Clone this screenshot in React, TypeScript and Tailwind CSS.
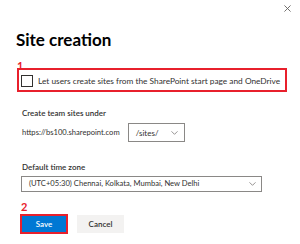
import React from 'react';

const Chevron: React.FC<{ className?: string }> = ({ className }) => (
  <svg viewBox="0 0 10 6" className={className} fill="none" stroke="#605e5c" strokeWidth="1">
    <path d="M0.5 0.5 L5 5 L9.5 0.5" />
  </svg>
);

const App: React.FC = () => {
  return (
    <div
      className="w-[300px] h-[244px] bg-white overflow-hidden text-[#323130]"
      style={{ fontFamily: 'Lato, "Noto Sans", sans-serif' }}
    >
      {/* close */}
      <div className="h-[16px] flex justify-end items-center pr-[9px]">
        <svg viewBox="0 0 8 8" className="w-[7px] h-[7px]" stroke="#605e5c" strokeWidth="1">
          <path d="M0.5 0.5 L7.5 7.5 M7.5 0.5 L0.5 7.5" />
        </svg>
      </div>

      <h1 className="mt-[12px] ml-[16px] h-[24px] leading-[24px] text-[17px] font-bold text-black">Site creation</h1>

      {/* annotation 1 */}
      <div className="mt-[8px] ml-[17px] h-[8px] leading-[11px] text-[11px] font-bold text-[#e8202c]">1</div>

      <div className="ml-[17px] w-[270px] h-[24px] border-2 border-[#e8202c] flex items-center pl-[2px] pt-[2px] gap-[5px]">
        <div className="w-[12px] h-[12px] border border-[#323130] bg-white shrink-0" />
        <span className="text-[8.3px] whitespace-nowrap">
          Let users create sites from the SharePoint start page and OneDrive
        </span>
      </div>

      <div className="mt-[14px] ml-[22px] h-[14px] leading-[14px] text-[8px] font-semibold">Create team sites under</div>

      <div className="mt-[3px] ml-[22px] h-[19px] flex items-center gap-[8px]">
        <span className="text-[7.6px] whitespace-nowrap">https://bs100.sharepoint.com</span>
        <div className="w-[57px] h-[19px] border border-[#8a8886] flex items-center justify-between pl-[7px] pr-[6px]">
          <span className="text-[8px]">/sites/</span>
          <Chevron className="w-[7px] h-[4px]" />
        </div>
      </div>

      <div className="mt-[18px] ml-[22px] h-[14px] leading-[14px] text-[8px] font-semibold">Default time zone</div>

      <div className="mt-[2px] ml-[21px] w-[241px] h-[16px] border border-[#8a8886] flex items-center justify-between pl-[7px] pr-[5px]">
        <span className="text-[7.6px] whitespace-nowrap">(UTC+05:30) Chennai, Kolkata, Mumbai, New Delhi</span>
        <Chevron className="w-[7px] h-[4px]" />
      </div>

      {/* annotation 2 */}
      <div className="mt-[8px] ml-[21px] h-[13px] leading-[13px] text-[11px] font-bold text-[#e8202c]">2</div>

      <div className="mt-[1px] ml-[20px] flex items-center gap-[9px]">
        <div className="w-[48px] h-[20px] border-2 border-[#e8202c] flex">
          <button className="flex-1 bg-[#0078d4] text-white text-[8px] font-semibold leading-none">Save</button>
        </div>
        <button className="w-[47px] h-[18px] bg-[#f3f2f1] text-[8px] font-semibold text-[#323130] leading-none">Cancel</button>
      </div>
    </div>
  );
};

export default App;
